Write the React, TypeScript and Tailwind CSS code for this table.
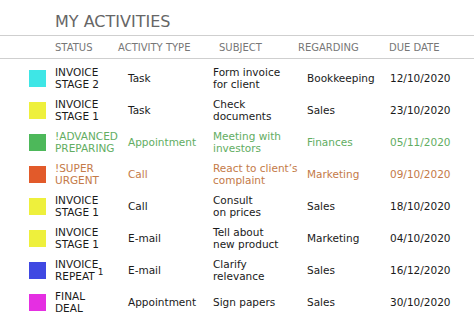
import React from "react";

type Row = {
  color: string;
  status: [string, string];
  type: string;
  subject: [string, string?];
  regarding: string;
  due: string;
  tone?: "green" | "orange";
  sup?: boolean;
};

const rows: Row[] = [
  { color: "bg-[#3ee6e6]", status: ["INVOICE", "STAGE 2"], type: "Task", subject: ["Form invoice", "for client"], regarding: "Bookkeeping", due: "12/10/2020" },
  { color: "bg-[#eef03c]", status: ["INVOICE", "STAGE 1"], type: "Task", subject: ["Check", "documents"], regarding: "Sales", due: "23/10/2020" },
  { color: "bg-[#4db85a]", status: ["!ADVANCED", "PREPARING"], type: "Appointment", subject: ["Meeting with", "investors"], regarding: "Finances", due: "05/11/2020", tone: "green" },
  { color: "bg-[#e25a2a]", status: ["!SUPER", "URGENT"], type: "Call", subject: ["React to client’s", "complaint"], regarding: "Marketing", due: "09/10/2020", tone: "orange" },
  { color: "bg-[#eef03c]", status: ["INVOICE", "STAGE 1"], type: "Call", subject: ["Consult", "on prices"], regarding: "Sales", due: "18/10/2020" },
  { color: "bg-[#eef03c]", status: ["INVOICE", "STAGE 1"], type: "E-mail", subject: ["Tell about", "new product"], regarding: "Marketing", due: "04/10/2020" },
  { color: "bg-[#3f48e2]", status: ["INVOICE", "REPEAT"], type: "E-mail", subject: ["Clarify", "relevance"], regarding: "Sales", due: "16/12/2020", sup: true },
  { color: "bg-[#e52fe2]", status: ["FINAL", "DEAL"], type: "Appointment", subject: ["Sign papers"], regarding: "Sales", due: "30/10/2020" },
];

export default function App() {
  return (
    <div
      className="w-[474px] h-[325px] bg-white overflow-hidden"
      style={{ fontFamily: "'DejaVu Sans', 'Open Sans', sans-serif" }}
    >
      <div className="pl-[55px] pt-[12px] h-[35px] text-[16px] leading-[20px] text-[#666]">
        MY ACTIVITIES
      </div>
      <div className="border-t border-b border-[#cfcfcf] h-[24px] flex items-center text-[10px] text-[#777]">
        <div className="w-[55px]" />
        <div className="w-[63px]">STATUS</div>
        <div className="w-[101px]">ACTIVITY TYPE</div>
        <div className="w-[79px]">SUBJECT</div>
        <div className="w-[91px]">REGARDING</div>
        <div>DUE DATE</div>
      </div>
      <div className="pt-[3px]">
        {rows.map((r, i) => {
          const tone =
            r.tone === "green" ? "text-[#62ad62]" : r.tone === "orange" ? "text-[#c47a48]" : "text-[#1a1a1a]";
          return (
            <div key={i} className={`h-[32px] flex items-center text-[10.5px] leading-[12px] ${tone}`}>
              <div className="w-[29px]" />
              <div className={`w-[17px] h-[17px] ${r.color}`} />
              <div className="w-[9px]" />
              <div className="w-[73px] relative">
                <div>{r.status[0]}</div>
                <div>
                  {r.status[1]}
                  {r.sup && <span className="relative top-[-5px] left-[3px] text-[9px]">1</span>}
                </div>
              </div>
              <div className="w-[85px]">{r.type}</div>
              <div className="w-[94px]">
                <div>{r.subject[0]}</div>
                {r.subject[1] && <div>{r.subject[1]}</div>}
              </div>
              <div className="w-[83px]">{r.regarding}</div>
              <div>{r.due}</div>
            </div>
          );
        })}
      </div>
    </div>
  );
}
